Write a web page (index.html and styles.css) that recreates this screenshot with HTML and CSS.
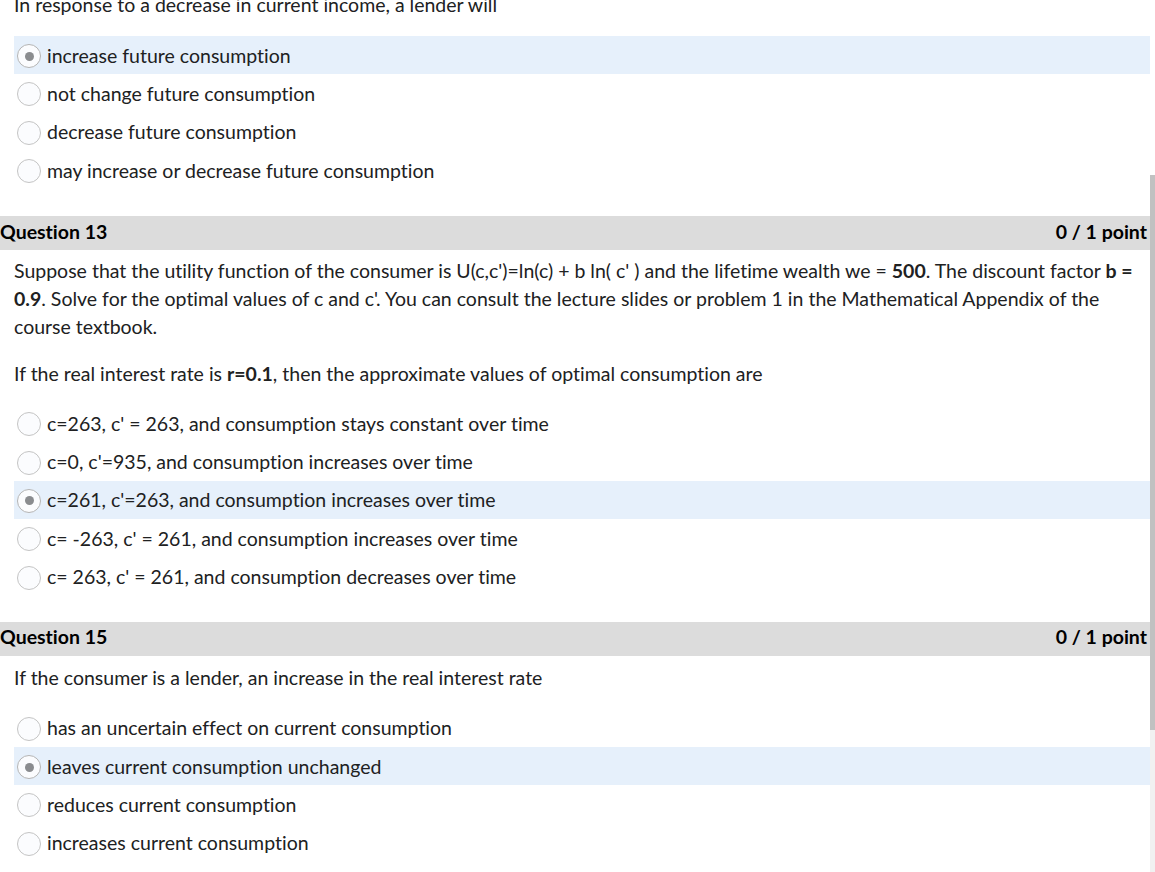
FILE: index.html
```html
<!DOCTYPE html>
<html>
<head>
<meta charset="utf-8">
<link rel="stylesheet" href="styles.css">
</head>
<body>
<div class="frame">
  <main class="page">
    <section class="question first">
      <div class="q-body">
        <p class="q-text">In response to a decrease in current income, a lender will</p>
        <ul class="options">
          <li class="opt selected"><span class="radio"></span><span>increase future consumption</span></li>
          <li class="opt"><span class="radio"></span><span>not change future consumption</span></li>
          <li class="opt"><span class="radio"></span><span>decrease future consumption</span></li>
          <li class="opt"><span class="radio"></span><span>may increase or decrease future consumption</span></li>
        </ul>
      </div>
    </section>

    <section class="question q13">
      <header class="q-head"><h2>Question 13</h2><span class="score">0 / 1 point</span></header>
      <div class="q-body">
        <p class="q-text">Suppose that the utility function of the consumer is U(c,c')=ln(c) + b ln( c' ) and the lifetime wealth we = <b>500</b>. The discount factor <b>b = 0.9</b>. Solve for the optimal values of c and c'. You can consult the lecture slides or problem 1 in the Mathematical Appendix of the course textbook.</p>
        <p class="q-text second">If the real interest rate is <b>r=0.1</b>, then the approximate values of optimal consumption are</p>
        <ul class="options">
          <li class="opt"><span class="radio"></span><span>c=263, c' = 263, and consumption stays constant over time</span></li>
          <li class="opt"><span class="radio"></span><span>c=0, c'=935, and consumption increases over time</span></li>
          <li class="opt selected"><span class="radio"></span><span>c=261, c'=263, and consumption increases over time</span></li>
          <li class="opt"><span class="radio"></span><span>c= -263, c' = 261, and consumption increases over time</span></li>
          <li class="opt"><span class="radio"></span><span>c= 263, c' = 261, and consumption decreases over time</span></li>
        </ul>
      </div>
    </section>

    <section class="question q15">
      <header class="q-head"><h2>Question 15</h2><span class="score">0 / 1 point</span></header>
      <div class="q-body">
        <p class="q-text">If the consumer is a lender, an increase in the real interest rate</p>
        <ul class="options">
          <li class="opt"><span class="radio"></span><span>has an uncertain effect on current consumption</span></li>
          <li class="opt selected"><span class="radio"></span><span>leaves current consumption unchanged</span></li>
          <li class="opt"><span class="radio"></span><span>reduces current consumption</span></li>
          <li class="opt"><span class="radio"></span><span>increases current consumption</span></li>
        </ul>
      </div>
    </section>
  </main>
  <div class="rail"><div class="thumb"></div><div class="track"></div></div>
</div>
</body>
</html>
```

FILE: styles.css
```css
html, body {
  margin: 0;
  padding: 0;
  background: #ffffff;
  overflow: hidden;
}
body {
  font-family: Lato, "Noto Sans", sans-serif;
  font-size: 19.5px;
  color: #202122;
  font-variant-ligatures: none;
}
.frame {
  display: flex;
  height: 872px;
  overflow: hidden;
}
.page {
  width: 1150px;
  flex: none;
  margin-top: -9px;
}
.rail {
  flex: 1;
  display: flex;
  flex-direction: column;
  padding-top: 175px;
}
.thumb {
  height: 555px;
  background: #c1c1c1;
}
.track {
  flex: 1;
  background: #f1f1f1;
}
.question {
  margin-bottom: 26px;
}
.question.first {
  margin-bottom: 27px;
}
.q-head {
  display: flex;
  justify-content: space-between;
  align-items: center;
  height: 34px;
  box-sizing: border-box;
  background: #dcdcdc;
  padding: 0 3px 3px 0;
  line-height: 24px;
}
.q-head h2 {
  margin: 0;
  font-size: 19.5px;
  font-weight: 700;
  color: #000;
}
.score {
  font-weight: 700;
  color: #000;
}
.q-body {
  padding: 7px 0 0 14px;
}
.question.first .q-body {
  padding-top: 0;
}
.q15 .q-body {
  padding-top: 8px;
}
.q-text {
  margin: 0;
  line-height: 28px;
  padding-right: 14px;
}
.q-text b {
  font-weight: 700;
}
.q-text.second {
  margin-top: 19px;
}
.options {
  list-style: none;
  margin: 17px 0 0 0;
  padding: 0;
}
.q13 .options {
  margin-top: 16px;
}
.opt {
  display: flex;
  align-items: center;
  gap: 6px;
  height: 38.3px;
  padding-left: 3px;
}
.opt.selected {
  background: #e6f0fb;
}
.radio {
  width: 22px;
  height: 22px;
  border: 1px solid #c4c4c4;
  border-radius: 50%;
  background: #fbfcfe;
  flex: none;
  display: flex;
  align-items: center;
  justify-content: center;
  margin-top: 2px;
}
.selected .radio {
  border-color: #b4b4b4;
}
.selected .radio::after {
  content: "";
  width: 9px;
  height: 9px;
  border-radius: 50%;
  background: #8a8c8f;
}
```
